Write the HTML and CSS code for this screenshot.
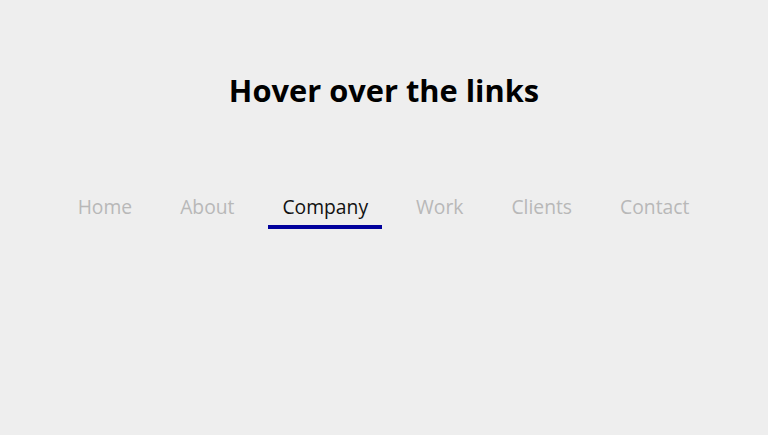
FILE: index.html
```html
<!DOCTYPE html>
<html>
<head>
<meta charset="utf-8">
<link rel="stylesheet" href="styles.css">
</head>
<body>
<h1 class="title">Hover over the links</h1>
<nav class="nav">
  <a class="link" href="#">Home</a>
  <a class="link" href="#">About</a>
  <a class="link active" href="#">Company</a>
  <a class="link" href="#">Work</a>
  <a class="link" href="#">Clients</a>
  <a class="link" href="#">Contact</a>
</nav>
</body>
</html>
```
FILE: styles.css
```css
html, body {
  margin: 0;
  padding: 0;
}
body {
  background: #eeeeee;
  font-family: "Open Sans", sans-serif;
  height: 435px;
  overflow: hidden;
}
.title {
  margin: 0;
  padding-top: 69px;
  text-align: center;
  font-size: 30.8px;
  font-weight: 700;
  line-height: 42px;
  color: #000;
}
.nav {
  display: flex;
  justify-content: center;
  gap: 20px;
  margin-top: 82px;
  padding-right: 1px;
}
.link {
  display: block;
  padding: 1px 14px 5px;
  font-size: 19.3px;
  line-height: 26px;
  color: #b8b8b8;
  text-decoration: none;
  border-bottom: 4px solid transparent;
}
.link.active {
  color: #111;
  border-bottom-color: #00009c;
}
```
